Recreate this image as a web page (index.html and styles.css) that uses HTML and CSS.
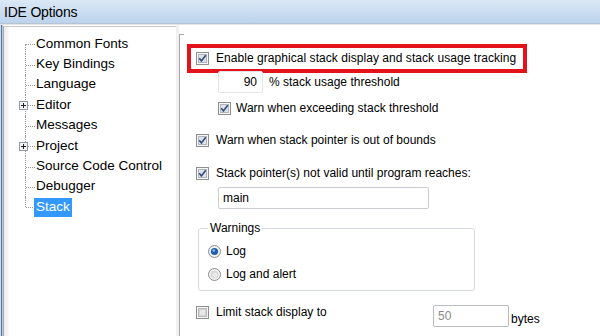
FILE: index.html
```html
<!DOCTYPE html>
<html>
<head>
<meta charset="utf-8">
<title>IDE Options</title>
<link rel="stylesheet" href="styles.css">
</head>
<body>
<div class="window">
  <div class="titlebar"><span class="title">IDE Options</span></div>
  <div class="client">
    <div class="frame"></div>
    <div class="tree">
      <ul class="nodes">
        <li class="node first"><span class="label">Common Fonts</span></li>
        <li class="node"><span class="label">Key Bindings</span></li>
        <li class="node"><span class="label">Language</span></li>
        <li class="node"><span class="expander"><svg width="9" height="9" viewBox="0 0 9 9"><rect x="0.5" y="0.5" width="8" height="8" fill="#f3f3f3" stroke="#8f9aa6"/><path d="M2 4.5H7M4.5 2V7" stroke="#202020" stroke-width="1"/></svg></span><span class="label">Editor</span></li>
        <li class="node"><span class="label">Messages</span></li>
        <li class="node"><span class="expander"><svg width="9" height="9" viewBox="0 0 9 9"><rect x="0.5" y="0.5" width="8" height="8" fill="#f3f3f3" stroke="#8f9aa6"/><path d="M2 4.5H7M4.5 2V7" stroke="#202020" stroke-width="1"/></svg></span><span class="label">Project</span></li>
        <li class="node"><span class="label">Source Code Control</span></li>
        <li class="node"><span class="label">Debugger</span></li>
        <li class="node last"><span class="label selected">Stack</span></li>
      </ul>
    </div>
    <div class="gutter"></div>
    <div class="page">
      <div class="row row-enable">
        <span class="box"><svg width="13" height="13" viewBox="0 0 13 13"><rect x="0.5" y="0.5" width="12" height="12" fill="#f6f6f6" stroke="#8e8f8f"/><rect x="2.5" y="2.5" width="8" height="8" fill="#dde2ea" stroke="#b1b6bd"/><path d="M3.2 6.3L5.4 8.9L9.8 3.2" fill="none" stroke="#3b4f7c" stroke-width="1.7"/></svg></span>
        <span class="text">Enable graphical stack display and stack usage tracking</span>
        <span class="highlight"></span>
      </div>
      <div class="row row-threshold">
        <span class="textbox num">90</span>
        <span class="text">% stack usage threshold</span>
      </div>
      <div class="row row-warn-exceed">
        <span class="box"><svg width="13" height="13" viewBox="0 0 13 13"><rect x="0.5" y="0.5" width="12" height="12" fill="#f6f6f6" stroke="#8e8f8f"/><rect x="2.5" y="2.5" width="8" height="8" fill="#dde2ea" stroke="#b1b6bd"/><path d="M3.2 6.3L5.4 8.9L9.8 3.2" fill="none" stroke="#3b4f7c" stroke-width="1.7"/></svg></span>
        <span class="text">Warn when exceeding stack threshold</span>
      </div>
      <div class="row row-bounds">
        <span class="box"><svg width="13" height="13" viewBox="0 0 13 13"><rect x="0.5" y="0.5" width="12" height="12" fill="#f6f6f6" stroke="#8e8f8f"/><rect x="2.5" y="2.5" width="8" height="8" fill="#dde2ea" stroke="#b1b6bd"/><path d="M3.2 6.3L5.4 8.9L9.8 3.2" fill="none" stroke="#3b4f7c" stroke-width="1.7"/></svg></span>
        <span class="text">Warn when stack pointer is out of bounds</span>
      </div>
      <div class="row row-valid">
        <span class="box"><svg width="13" height="13" viewBox="0 0 13 13"><rect x="0.5" y="0.5" width="12" height="12" fill="#f6f6f6" stroke="#8e8f8f"/><rect x="2.5" y="2.5" width="8" height="8" fill="#dde2ea" stroke="#b1b6bd"/><path d="M3.2 6.3L5.4 8.9L9.8 3.2" fill="none" stroke="#3b4f7c" stroke-width="1.7"/></svg></span>
        <span class="text">Stack pointer(s) not valid until program reaches:</span>
      </div>
      <div class="textbox main-box">main</div>
      <fieldset class="group">
        <legend>Warnings</legend>
        <div class="radio-row first-radio">
          <span class="radio"><svg width="13" height="13" viewBox="0 0 13 13"><circle cx="6.5" cy="6.5" r="6" fill="#f2f2f2" stroke="#8c8c8c"/><circle cx="6.5" cy="6.5" r="3.6" fill="#1f5ea8"/><circle cx="5.8" cy="5.6" r="1.4" fill="#7fb0e8"/></svg></span>
          <span class="text">Log</span>
        </div>
        <div class="radio-row">
          <span class="radio"><svg width="13" height="13" viewBox="0 0 13 13"><circle cx="6.5" cy="6.5" r="6" fill="#f2f2f2" stroke="#8c8c8c"/><circle cx="6.5" cy="6.5" r="4" fill="#d9d9d9"/><circle cx="7" cy="7" r="2.5" fill="#e9e9e9"/></svg></span>
          <span class="text">Log and alert</span>
        </div>
      </fieldset>
      <div class="row row-limit">
        <span class="box"><svg width="13" height="13" viewBox="0 0 13 13"><rect x="0.5" y="0.5" width="12" height="12" fill="#f6f6f6" stroke="#8e8f8f"/><rect x="2.5" y="2.5" width="8" height="8" fill="#d4d4d4" stroke="#b9b9b9"/><rect x="4" y="4" width="5" height="5" fill="#e8e8e8"/></svg></span>
        <span class="text limit-text">Limit stack display to</span>
        <span class="textbox bytes-box">50</span>
        <span class="text bytes">bytes</span>
      </div>
    </div>
  </div>
</div>
</body>
</html>
```

FILE: styles.css
```css
html, body {
  margin: 0;
  padding: 0;
}
body {
  width: 600px;
  height: 336px;
  overflow: hidden;
  background: #ffffff;
  font-family: "Liberation Sans", Arial, sans-serif;
  color: #000;
}
.window {
  display: flex;
  flex-direction: column;
  height: 336px;
}
.titlebar {
  height: 24px;
  flex: none;
  background: linear-gradient(180deg, #dbe8f5 0%, #cddff1 45%, #bcd3eb 100%);
  border-bottom: 1px solid #b4c4d6;
  display: flex;
  align-items: center;
  padding-left: 4px;
  box-sizing: border-box;
}
.title {
  font-size: 14px;
  letter-spacing: -0.2px;
}
.client {
  flex: 1;
  display: flex;
  background: #ffffff;
  border-top: 1px solid #e4e4e4;
}
.frame {
  width: 3px;
  flex: none;
  background: linear-gradient(90deg, #c9dcef 0 1px, #5b7599 1px 2px, #b7cce3 2px 3px);
}
.tree {
  width: 173px;
  flex: none;
  border-left: 1px solid #a3aab3;
  border-top: 1px solid #c9c9c9;
  margin-top: 1px;
  background: linear-gradient(90deg, #ecebe9 0, #f6f5f4 4px, #ffffff 6px);
  box-sizing: border-box;
  padding-top: 7px;
}
.nodes {
  list-style: none;
  margin: 0;
  padding: 0;
}
.node {
  position: relative;
  height: 20.4px;
  display: flex;
  align-items: center;
  padding-left: 30px;
  font-size: 13.5px;
}
.node::before {
  content: "";
  position: absolute;
  left: 22px;
  top: 50%;
  width: 9px;
  border-top: 1px dotted #9a9a9a;
}
.node::after {
  content: "";
  position: absolute;
  left: 21px;
  top: 0;
  bottom: 0;
  border-left: 1px dotted #9a9a9a;
}
.node.first::after {
  top: 50%;
}
.node.last::after {
  bottom: 50%;
}
.expander {
  position: absolute;
  left: 15px;
  top: 50%;
  width: 9px;
  height: 9px;
  margin-top: -4px;
  z-index: 1;
  display: block;
  line-height: 0;
}
.label {
  padding: 1px 2px 2px;
  line-height: 16px;
}
.label.selected {
  background: #3399ff;
  color: #fff;
}
.gutter {
  width: 3px;
  flex: none;
  background: #f0f0f0;
}
.page {
  flex: 1;
  margin-top: 9px;
  border-left: 1px solid #a7a7a7;
  position: relative;
  padding: 14px 0 0 16px;
  font-size: 12px;
}
.page::before {
  content: "";
  position: absolute;
  left: 0;
  top: 0;
  width: 4px;
  border-top: 1px solid #a7a7a7;
}
.row {
  display: flex;
  align-items: center;
  height: 20px;
  position: relative;
}
.box, .radio {
  width: 13px;
  height: 13px;
  flex: none;
  line-height: 0;
}
.text {
  white-space: nowrap;
}
.box + .text {
  margin-left: 7px;
}
.row-enable .text {
  letter-spacing: 0.05px;
}
.highlight {
  position: absolute;
  left: -9px;
  top: -4px;
  width: 340px;
  height: 29px;
  border: 4px solid #e4131b;
  box-sizing: border-box;
}
.row-threshold {
  height: 22px;
  margin-top: 3px;
  margin-left: 22px;
}
.textbox {
  display: flex;
  align-items: center;
  box-sizing: border-box;
  border: 1px solid #c9ccd3;
  border-radius: 2px;
  background: #fff;
  height: 22px;
  font-size: 12px;
}
.num {
  width: 45px;
  justify-content: flex-end;
  padding-right: 5px;
  border-color: #e3e5ea;
}
.row-threshold .text {
  margin-left: 6px;
}
.row-warn-exceed {
  margin-top: 5px;
  margin-left: 22px;
}
.row-warn-exceed .text {
  margin-left: 5px;
}
.row-bounds {
  margin-top: 12px;
}
.row-valid {
  margin-top: 13px;
}
.main-box {
  margin-top: 4px;
  margin-left: 22px;
  width: 211px;
  padding-left: 4px;
}
.group {
  margin: 12px 0 0 2px;
  width: 277px;
  box-sizing: border-box;
  border: 1px solid #d5dbe1;
  border-radius: 3px;
  padding: 5px 0 0 9px;
  height: 70px;
}
.group legend {
  padding: 0 2px;
  font-size: 12px;
  line-height: 15px;
}
.radio-row {
  display: flex;
  align-items: center;
  height: 20px;
  margin-top: 3px;
}
.first-radio {
  margin-top: 0;
}
.radio + .text {
  margin-left: 5px;
}
.row-limit {
  margin-top: 14px;
  height: 22px;
  align-items: flex-start;
}
.row-limit .box {
  margin-top: 1px;
}
.limit-text {
  width: 217px;
  margin-top: 0;
  line-height: 15px;
}
.bytes-box {
  width: 76px;
  padding-left: 4px;
  color: #8a8a8a;
  border-color: #b9bcc3;
}
.bytes {
  margin-left: 2px;
  margin-top: 7px;
  line-height: 15px;
}
```
